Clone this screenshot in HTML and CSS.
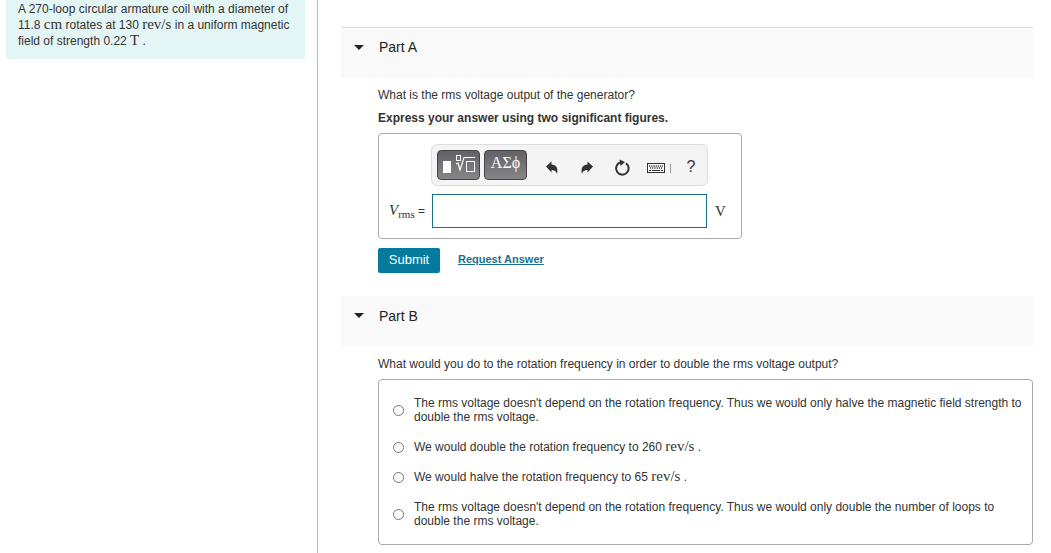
FILE: index.html
```html
<!DOCTYPE html>
<html lang="en">
<head>
    <meta charset="UTF-8">
    <meta name="viewport" content="width=device-width, initial-scale=1.0">
    <title>RMS Voltage of a Generator</title>
    <link rel="stylesheet" href="styles.css">
</head>
<body>

<div class="page">
    <aside class="sidebar">
        <p class="problem">A 270-loop circular armature coil with a diameter of 11.8 <span class="math">cm</span> rotates at 130 <span class="math">rev/s</span> in a uniform magnetic field of strength 0.22 <span class="math">T</span> .</p>
    </aside>

    <main class="content">
        <section class="part">
            <h2 class="part-header first"><span class="caret"></span>Part A</h2>
            <form class="part-body">
                <p class="question">What is the rms voltage output of the generator?</p>
                <p class="instructions">Express your answer using two significant figures.</p>

                <div class="answer-box">
                    <div class="toolbar">
                        <button type="button" class="tool-dark" aria-label="Templates">
                            <svg width="34" height="22" viewBox="0 0 34 22">
                                <rect x="1" y="7" width="8" height="12" fill="#fff"/>
                                <g fill="none" stroke="#fff">
                                    <rect x="14.5" y="1.5" width="4" height="5"/>
                                    <path d="M14 10l2-1 2 7 4-12.500h11" stroke-width="1.200"/>
                                    <rect x="24.500" y="7.500" width="8" height="10"/>
                                </g>
                            </svg>
                        </button>
                        <button type="button" class="tool-dark greek">ΑΣϕ</button>
                        <span class="tools">
                            <button type="button" class="tool" aria-label="Undo">
                                <svg width="14" height="14" viewBox="0 0 14 14"><path d="M1 5.500L6.500 .5v3c4.500 0 7 3.500 5.500 9.500-.8-3-2.500-4-5.500-4v2.500z" fill="#333"/></svg>
                            </button>
                            <button type="button" class="tool" aria-label="Redo">
                                <svg width="14" height="14" viewBox="0 0 14 14"><path d="M13 5.500L7.500 .5v3c-4.500 0-7 3.500-5.500 9.500 .8-3 2.500-4 5.500-4v2.500z" fill="#333"/></svg>
                            </button>
                            <button type="button" class="tool" aria-label="Reset">
                                <svg width="18" height="18" viewBox="0 0 18 18"><path d="M13 4.200A6.300 6.300 0 1 1 7 3.500" fill="none" stroke="#333" stroke-width="2"/><path d="M6.500 .5l5.500 2.500-4.500 4z" fill="#333"/></svg>
                            </button>
                            <button type="button" class="tool keyboard" aria-label="Keyboard shortcuts">
                                <svg width="24" height="12" viewBox="0 0 24 12">
                                    <rect x=".5" y="1.500" width="17" height="9" fill="#fff" stroke="#333"/>
                                    <path d="M2 4h14M3 6h13" stroke="#333" stroke-width="1.300" stroke-dasharray="1.200 1"/>
                                    <path d="M2 8.500h2M5 8.500h8M14 8.500h2" stroke="#333"/>
                                    <path d="M23.500 2v9" stroke="#999"/>
                                </svg>
                            </button>
                            <button type="button" class="tool help" aria-label="Help">?</button>
                        </span>
                    </div>
                    <label class="answer-label" for="vrms"><span class="math"><i>V</i><sub>rms</sub></span> =</label>
                    <input class="answer-input" type="text" id="vrms" name="vrms">
                    <span class="math unit">V</span>
                </div>

                <div class="actions">
                    <button type="submit" class="submit">Submit</button>
                    <a class="request" href="#">Request Answer</a>
                </div>
            </form>
        </section>

        <section class="part">
            <h2 class="part-header"><span class="caret"></span>Part B</h2>
            <form class="part-body">
                <p class="question">What would you do to the rotation frequency in order to double the rms voltage output?</p>
                <div class="choices">
                    <label class="choice">
                        <input type="radio" name="choice" value="1">
                        <span>The rms voltage doesn't depend on the rotation frequency. Thus we would only halve the magnetic field strength to double the rms voltage.</span>
                    </label>
                    <label class="choice">
                        <input type="radio" name="choice" value="2">
                        <span>We would double the rotation frequency to 260 <span class="math">rev/s</span> .</span>
                    </label>
                    <label class="choice">
                        <input type="radio" name="choice" value="3">
                        <span>We would halve the rotation frequency to 65 <span class="math">rev/s</span> .</span>
                    </label>
                    <label class="choice">
                        <input type="radio" name="choice" value="4">
                        <span>The rms voltage doesn't depend on the rotation frequency. Thus we would only double the number of loops to double the rms voltage.</span>
                    </label>
                </div>
            </form>
        </section>
    </main>
</div>

</body>
</html>
```
FILE: styles.css
```css
* {
    box-sizing: border-box;
}
body {
    margin: 0;
    font-family: "Liberation Sans", Arial, sans-serif;
    font-size: 12px;
    line-height: 16px;
    color: #333;
    background: #fff;
}
p, h2 {
    margin: 0;
}
button {
    font-family: inherit;
    cursor: pointer;
}
svg {
    display: block;
}
.page {
    display: grid;
    grid-template-columns: 318px 1fr;
    min-height: 100vh;
}
.sidebar {
    padding: 0 12px 0 6px;
    border-right: 1px solid #b4bcc2;
}
.problem {
    padding: 1px 12px 10px;
    background: #e4f5f6;
}
.math {
    font-family: "Liberation Serif", "Times New Roman", serif;
    font-size: 15px;
    line-height: 12px;
}
.content {
    padding: 27px 18px 7px 23px;
}
.part-header {
    display: flex;
    align-items: center;
    gap: 15px;
    height: 51px;
    padding: 0 13px 12px;
    background: #f9f9f9;
    font-size: 14px;
    font-weight: normal;
    color: #222;
}
.part-header.first {
    border-top: 1px solid #ddd;
}
.caret {
    border: 5px solid transparent;
    border-top-color: #222;
    border-bottom: 0;
}
.part-body {
    padding: 9px 0 0 37px;
}
.part + .part {
    margin-top: 23px;
}
.question {
    margin-bottom: 7px;
}
.instructions {
    margin-bottom: 7px;
    font-weight: bold;
}
.answer-box {
    display: grid;
    grid-template-columns: 35px 275px auto;
    align-items: center;
    gap: 8px;
    width: 364px;
    max-width: 100%;
    padding: 10px;
    border: 1px solid #aaa;
    border-radius: 4px;
}
.toolbar {
    grid-column: 1 / -1;
    display: flex;
    align-items: center;
    gap: 4px;
    width: 277px;
    height: 42px;
    margin-left: 42px;
    padding: 0 5px;
    background: #f4f4f4;
    border: 1px solid #ddd;
    border-radius: 6px;
}
.tool-dark {
    display: flex;
    flex: none;
    align-items: center;
    justify-content: center;
    width: 43px;
    height: 30px;
    padding: 0;
    border: 1px solid #444;
    border-radius: 4px;
    background: linear-gradient(#626266, #86868a);
    color: #fff;
}
.greek {
    padding-bottom: 4px;
    font-family: "Liberation Serif", serif;
    font-size: 16px;
}
.tools {
    display: flex;
    flex: 1;
    padding-left: 3px;
}
.tool {
    display: flex;
    align-items: center;
    justify-content: center;
    width: 35px;
    height: 30px;
    padding: 6px 0 0;
    border: 0;
    background: none;
    color: #333;
}
.keyboard {
    width: 40px;
}
.help {
    width: 24px;
    padding-top: 4px;
    font-size: 16px;
}
.answer-label {
    text-align: right;
    white-space: nowrap;
}
.answer-label sub {
    font-size: 11px;
    vertical-align: -3px;
}
.answer-input {
    width: 100%;
    height: 34px;
    padding: 0 8px;
    border: 1px solid #1b6f86;
    background: #fff;
}
.actions {
    display: flex;
    align-items: center;
    gap: 18px;
    margin-top: 9px;
}
.submit {
    width: 62px;
    height: 25px;
    padding: 0 0 2px;
    border: 0;
    border-radius: 2px;
    background: #047a9c;
    color: #fff;
    font-size: 13px;
}
.request {
    padding-bottom: 3px;
    font-size: 11px;
    font-weight: bold;
    color: #19728a;
}
.choices {
    display: flex;
    flex-direction: column;
    gap: 16px;
    padding: 16px 8px 16px 14px;
    border: 1px solid #aaa;
    border-radius: 4px;
    line-height: 14px;
}
.choice {
    display: flex;
    align-items: center;
    gap: 10px;
}
.choice input {
    appearance: none;
    flex: none;
    width: 11px;
    height: 11px;
    margin: 0;
    border: 1px solid #777;
    border-radius: 50%;
    background: #fff;
}
.choice input:checked {
    border: 4px solid #047a9c;
}
```
